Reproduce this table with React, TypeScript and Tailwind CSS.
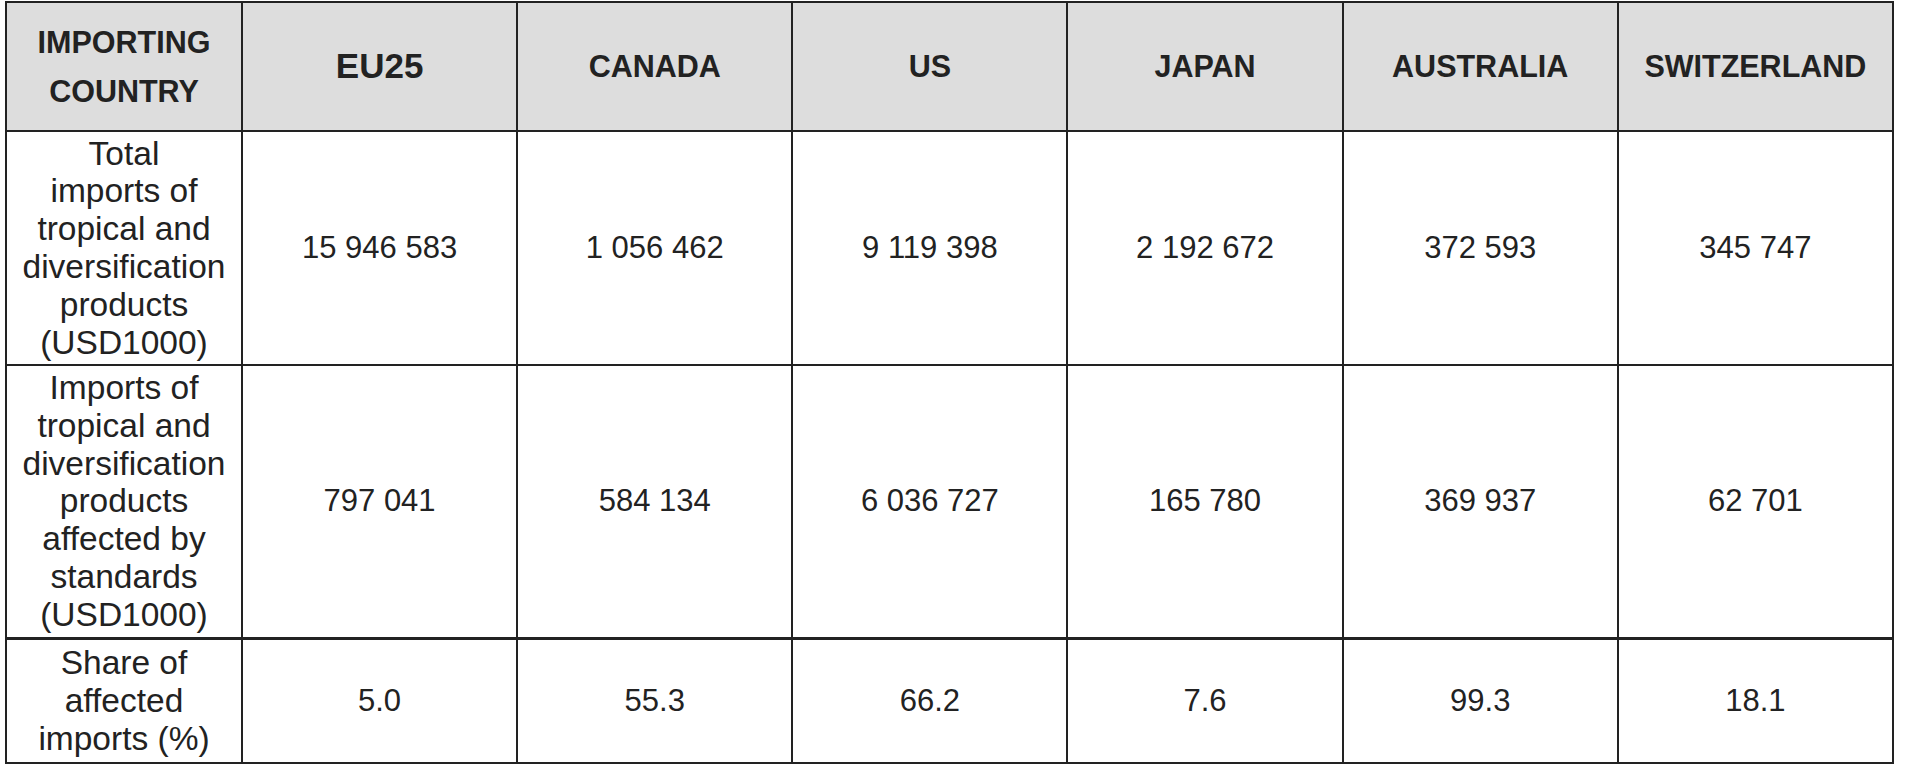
const columns = ["CANADA", "US", "JAPAN", "AUSTRALIA", "SWITZERLAND"];

const rows = [
  {
    label: ["Total", "imports of", "tropical and", "diversification", "products", "(USD1000)"],
    height: "h-[234px]",
    values: ["15 946 583", "1 056 462", "9 119 398", "2 192 672", "372 593", "345 747"],
  },
  {
    label: ["Imports of", "tropical and", "diversification", "products", "affected by", "standards", "(USD1000)"],
    height: "h-[273px]",
    values: ["797 041", "584 134", "6 036 727", "165 780", "369 937", "62 701"],
  },
  {
    label: ["Share of", "affected", "imports (%)"],
    height: "h-[125px]",
    values: ["5.0", "55.3", "66.2", "7.6", "99.3", "18.1"],
  },
];

export default function App() {
  return (
    <div className="min-h-screen bg-white pl-[5px] pt-[1px] font-['Liberation_Sans',Arial,sans-serif] text-[#222]">
      <table className="w-[1889px] table-fixed border-collapse border-2 border-[#222]">
        <colgroup>
          <col className="w-[236px]" />
          <col />
          <col />
          <col />
          <col />
          <col />
          <col />
        </colgroup>
        <thead>
          <tr className="h-[129px] bg-[#dddddd]">
            <th className="border-2 border-[#222] px-1 text-[30.5px] font-bold leading-[49px]">
              IMPORTING
              <br />
              COUNTRY
            </th>
            <th className="border-2 border-[#222] text-[35px] font-bold">EU25</th>
            {columns.map((c) => (
              <th key={c} className="border-2 border-[#222] text-[30.5px] font-bold">
                {c}
              </th>
            ))}
          </tr>
        </thead>
        <tbody>
          {rows.map((r, i) => (
            <tr key={i} className={r.height}>
              <td
                className={
                  "whitespace-nowrap border-2 border-[#222] text-center text-[33.5px] leading-[37.8px]" +
                  (i === 2 ? " border-t-[3px]" : "")
                }
              >
                {r.label.map((line) => (
                  <div key={line}>{line}</div>
                ))}
              </td>
              {r.values.map((v, j) => (
                <td
                  key={j}
                  className={
                    "border-2 border-[#222] text-center text-[31px]" + (i === 2 ? " border-t-[3px]" : "")
                  }
                >
                  {v}
                </td>
              ))}
            </tr>
          ))}
        </tbody>
      </table>
    </div>
  );
}
